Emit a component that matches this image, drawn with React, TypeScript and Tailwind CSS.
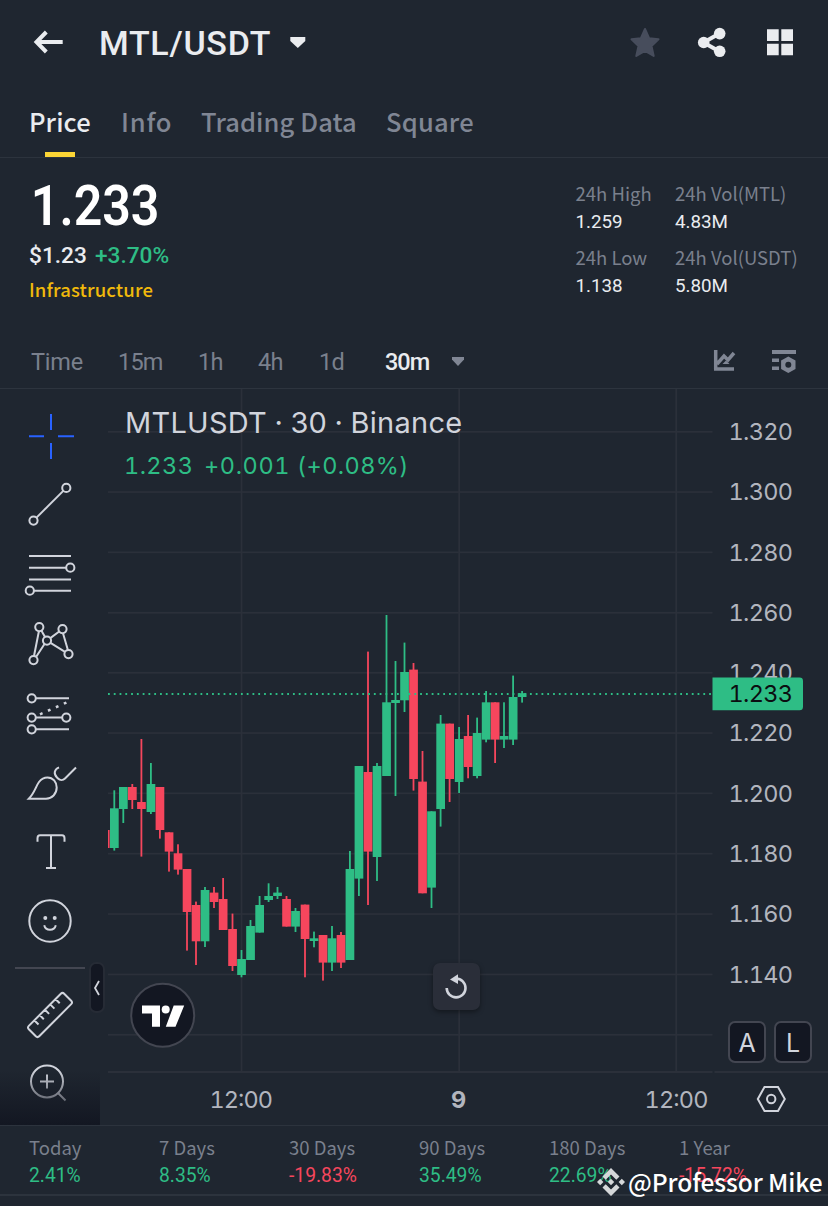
import React from 'react';

type Candle = [x: number, up: boolean, high: number, top: number, bottom: number, low: number];

const CANDLES: Candle[] = [
  [105.3, false, 830, 830, 848, 848],
  [114.4, true, 790.3, 808.3, 848, 850.6],
  [123.4, true, 787, 787, 809, 823],
  [132.4, false, 784, 787, 800, 809],
  [141.5, false, 739, 802, 809, 856.6],
  [151, true, 763, 784, 812, 814],
  [160, false, 787, 787, 830, 838.6],
  [169.1, false, 832.3, 832.3, 851.6, 871.6],
  [178.1, false, 844.3, 853.3, 869.6, 874.6],
  [187.1, false, 869, 869, 912, 950.6],
  [196.1, false, 901.6, 905, 941.3, 965],
  [205.1, true, 887, 890, 941.3, 947],
  [214.1, false, 887, 892.6, 902, 908],
  [223.2, false, 878, 899, 930, 930],
  [232.6, false, 913.6, 929, 966, 971],
  [241.6, true, 950, 959, 975, 977.3],
  [250.6, true, 920, 926, 960, 960],
  [259.7, true, 896, 905, 932.6, 932.6],
  [268.7, true, 883.3, 896, 900, 902],
  [277.6, true, 887, 892.6, 896, 899],
  [286.6, false, 896, 899, 926.6, 926.6],
  [295.6, true, 908, 911, 926.6, 932],
  [305.1, false, 904.6, 904.6, 939, 977.3],
  [314.1, true, 931.6, 938.3, 941, 947.3],
  [323.1, false, 935, 935, 962.6, 980.6],
  [332.1, true, 926, 938.3, 962.6, 971],
  [341.1, false, 932, 935, 962.6, 968],
  [350, true, 851, 869, 960, 960],
  [359, true, 766, 766, 878.6, 896],
  [368.1, false, 651.6, 772, 851.6, 905],
  [377.1, true, 763, 766, 857, 881],
  [386.6, true, 615, 702.3, 776, 776],
  [395.6, true, 661, 700, 703, 796],
  [404.6, true, 642.6, 672, 700.3, 712],
  [413.6, false, 663, 669.6, 779, 790.6],
  [422.6, false, 751, 781.6, 893.3, 893.3],
  [431.6, true, 811.3, 811.3, 887.6, 908],
  [440.7, true, 715, 723.6, 809, 826.6],
  [449.7, false, 723.6, 723.6, 779, 802],
  [459.2, true, 727, 739, 782, 793],
  [468.2, false, 715, 736, 767, 778.3],
  [477.2, true, 717.6, 733, 776, 778.3],
  [486.2, true, 691, 702.3, 739.6, 742.3],
  [495.2, false, 702.3, 702.3, 739.6, 763],
  [504.1, true, 702.3, 736, 739.6, 748],
  [513.2, true, 675.6, 697, 739.6, 745],
  [522.2, true, 691, 693.2, 697, 702.6],
];

const PRICES: [string, number][] = [
  ['1.320', 431.8],
  ['1.300', 492],
  ['1.280', 552.3],
  ['1.260', 612.7],
  ['1.240', 672.7],
  ['1.220', 733],
  ['1.200', 793.3],
  ['1.180', 853.6],
  ['1.160', 914],
  ['1.140', 974.4],
];

const STATS: [string, string, boolean][] = [
  ['Today', '2.41%', true],
  ['7 Days', '8.35%', true],
  ['30 Days', '-19.83%', false],
  ['90 Days', '35.49%', true],
  ['180 Days', '22.69%', true],
  ['1 Year', '-15.72%', false],
];

const WORDS = "font-['Noto_Sans_CJK_SC','Open_Sans',sans-serif]";
const DIGITS = "font-['Roboto',sans-serif]";

function Header() {
  return (
    <header className="flex h-[86px] items-center">
      <svg className="mb-[2px] ml-[33px] h-[24px] w-[31px] shrink-0" viewBox="33 30 31 24" fill="none" stroke="#eaecef" strokeWidth="4">
        <path d="M62.7 42H37M46.3 32 36.5 42 46.3 52" />
      </svg>
      <h1 className="mb-[1px] ml-[35px] w-[190px] font-['Roboto',sans-serif] text-[34px] font-medium leading-none tracking-[0.7px] text-[#eaecef]">
        MTL/USDT
      </h1>
      <svg className="mb-[4px] h-[13px] w-[18px] shrink-0" viewBox="289 34 18 13" fill="#eaecef">
        <path d="M290.3 36h15v4l-7.5 7-7.500-7z" />
      </svg>
      <svg className="ml-[322px] h-[32px] w-[32px] shrink-0" viewBox="629 27 32 32" fill="#474d5c" stroke="#474d5c" strokeWidth="2" strokeLinejoin="round">
        <path d="m645 29 4.200 9.300 9.300 1-7 6.600 2.200 10-8.700-5-8.700 5 2.200-10-7-6.600 9.300-1z" />
      </svg>
      <svg className="ml-[36px] h-[32px] w-[31px] shrink-0" viewBox="697 27 31 32" fill="#eaecef">
        <path d="m719.500 33.500-16 9 16 9" fill="none" stroke="#eaecef" strokeWidth="4" />
        <circle cx="719.700" cy="33.600" r="5.800" />
        <circle cx="703.700" cy="42.500" r="5.800" />
        <circle cx="719.700" cy="51.300" r="5.800" />
      </svg>
      <svg className="mb-[2px] ml-[38px] h-[28px] w-[28px] shrink-0" viewBox="766 28 28 28" fill="#eaecef">
        <path d="M767 29.300h11.700V41H767zM781.300 29.300H793V41h-11.700zM767 43.800h11.700v11.500H767zM781.300 43.800H793v11.500h-11.700z" />
      </svg>
    </header>
  );
}

function Tabs() {
  return (
    <nav className={`${WORDS} flex h-[72px] border-b border-[#2c333d] pl-[29px] text-[25.5px] font-medium text-[#808694]`}>
      <div className="flex w-[92px] flex-col">
        <span className="mt-[15px] h-[51px] leading-[40px] tracking-[0.1px] text-[#eaecef]">Price</span>
        <span className="ml-[16px] h-[5px] w-[30px] bg-[#fcd535]" />
      </div>
      <span className="mt-[15px] w-[80px] leading-[40px] tracking-[0.8px]">Info</span>
      <span className="mt-[15px] w-[185px] whitespace-nowrap leading-[40px] tracking-[0.1px]">Trading Data</span>
      <span className="mt-[15px] leading-[40px] tracking-[0.2px]">Square</span>
    </nav>
  );
}

function Metric({ label, value }: { label: string; value: string }) {
  return (
    <div className="h-[63.500px] whitespace-nowrap">
      <div className={`${WORDS} h-[27px] text-[18.500px] leading-[25px] text-[#7a808d]`}>{label}</div>
      <div className={`${DIGITS} h-[27px] text-[18.800px] leading-[29px] text-[#eaecef]`}>{value}</div>
    </div>
  );
}

function Summary() {
  return (
    <section className="flex h-[175px] justify-between pl-[29px]">
      <div>
        <div className={`${DIGITS} mt-[18px] h-[60px] w-[150px] origin-left scale-x-[0.910] pl-[2px] text-[55px] font-semibold leading-[60px] text-white`}>1.233</div>
        <div className={`${DIGITS} mt-[5px] flex h-[30px] gap-[8px] text-[22.700px] font-medium leading-[30px]`}>
          <span className="text-[#eaecef]">$1.23</span>
          <span className="text-[#2ebd85]">+3.70%</span>
        </div>
        <div className={`${WORDS} mt-[4px] h-[28px] text-[18.500px] font-medium leading-[28px] tracking-[0.130px] text-[#f0b90b]`}>Infrastructure</div>
      </div>
      <div className="mt-[23px] flex w-[252.500px]">
        <div className="w-[99.500px]">
          <Metric label="24h High" value="1.259" />
          <Metric label="24h Low" value="1.138" />
        </div>
        <div>
          <Metric label="24h Vol(MTL)" value="4.83M" />
          <Metric label="24h Vol(USDT)" value="5.80M" />
        </div>
      </div>
    </section>
  );
}

function Intervals() {
  return (
    <div className={`${DIGITS} flex h-[56px] items-center border-b border-[#2d343e] pl-[31px] pt-[1px] text-[23.500px] leading-none text-[#7a808d] [&>span]:pt-[3px]`}>
      <span className="w-[87px] tracking-[-0.200px]">Time</span>
      <span className="w-[80px] tracking-[-0.800px]">15m</span>
      <span className="w-[60px] tracking-[-0.700px]">1h</span>
      <span className="w-[61px] tracking-[-0.700px]">4h</span>
      <span className="w-[66px] tracking-[-0.700px]">1d</span>
      <span className="w-[66px] font-medium tracking-[-1px] text-[#eaecef]">30m</span>
      <svg className="h-[11px] w-[14px]" viewBox="0 0 14 11" fill="#808694">
        <path d="M1 1h12v2.500L7 10 1 3.500z" />
      </svg>
      <svg className="ml-[247px] h-[24px] w-[24px]" viewBox="712 349 24 24" fill="none" stroke="#808694" strokeWidth="3.500">
        <path d="M715.700 350v19M714 369h20M717 364l7-8 4 4 6-7" />
        <path d="m726 360.500 3.500 3.500h-7z" fill="#808694" stroke="none" />
      </svg>
      <svg className="ml-[35px] h-[26px] w-[26px]" viewBox="771 348 26 26" fill="#808694">
        <path d="M772 350h24v4h-24zM772 358.500h7v3.500h-7zM772 366.500h7v3.500h-7z" />
        <path fillRule="evenodd" d="m788.300 356.500 7.200 4v8.500l-7.200 4-7.200-4v-8.500zm0 5.300a3 3 0 1 0 0 6 3 3 0 0 0 0-6z" />
      </svg>
    </div>
  );
}

function Tool({ children }: { children: React.ReactNode }) {
  return (
    <div className="flex h-[69.250px] w-[100px] shrink-0 items-center justify-center">
      <svg className="h-[56px] w-[56px]" viewBox="-28 -28 56 56" fill="none" stroke="#d1d4dc" strokeWidth="2">
        {children}
      </svg>
    </div>
  );
}

function Toolbar() {
  return (
    <aside className="relative h-[736px] w-[108px] shrink-0 overflow-hidden pt-[12.500px]">
      <Tool>
        <path stroke="#2962ff" d="M-21 .200h15M8 .200h16M1-22v16M1 7v16" />
      </Tool>
      <Tool>
        <path d="m-13.500 12.600 26.800-26.700" />
        <circle cx="16.300" cy="-17.100" r="4.100" />
        <circle cx="-16.500" cy="15.600" r="4.100" />
      </Tool>
      <Tool>
        <path d="M-21-18.900h42M-21-7.300h37M-21 4.400h42M-16 15.700h37" />
        <circle cx="20.300" cy="-7.300" r="4.100" />
        <circle cx="-20.200" cy="15.700" r="4.100" />
      </Tool>
      <Tool>
        <path d="M-11.100-12.800-16 12M-8.500-13.300-5-7M9.200-12.500.300-5.900M13-10.800l4.900 16.800M.500-1.200 15 7.800M-5.500 0l-8.300 12.800" />
        <circle cx="-10.700" cy="-16.900" r="4.100" />
        <circle cx="12.500" cy="-14.900" r="4.100" />
        <circle cx="-3" cy="-3.400" r="4.100" />
        <circle cx="18.500" cy="10.100" r="4.100" />
        <circle cx="-16.500" cy="16.100" r="4.100" />
      </Tool>
      <Tool>
        <path d="M-14-14.700h33M-14 4.600h26M-14 16.300h33" />
        <path d="m-10 1.300 27-12" strokeWidth="2.500" strokeDasharray="2.800 5.900" />
        <circle cx="-18.300" cy="-14.700" r="4.100" />
        <circle cx="-18.300" cy="4.600" r="4.100" />
        <circle cx="16.300" cy="4.600" r="4.100" />
        <circle cx="-18.300" cy="16.300" r="4.100" />
      </Tool>
      <Tool>
        <path d="M-21.200 16.700C-15.500 11-14 4-11 0-8-4-5-4.600-2.500-4.600 3-4.600 6.700 0 6.700 5.600 6.700 12 2 16.700-4 16.700zM9-14.600C4-12.500 3.500-8 7-4.500l1 1c2 2 5 2 7 0l11-11" />
      </Tool>
      <Tool>
        <path d="M-12.500-10.200v-3.500c0-2 .800-3 2.500-3h22c1.700 0 2.500 1 2.500 3v3.500M1-16.700v32.900M-4 16H6" />
      </Tool>
      <Tool>
        <circle cx="0" cy="0" r="20.700" />
        <path d="M-5.800 4.300c1.500 6 10.100 6 11.600 0" />
        <path d="M-6.700-3a2 2 0 1 0 4 0 2 2 0 1 0-4 0M2.700-3a2 2 0 1 0 4 0 2 2 0 1 0-4 0" fill="#d1d4dc" stroke="none" />
      </Tool>
      <div className="ml-[15px] mt-[11.500px] h-[2px] w-[70px] bg-[#434651]" />
      <div className="h-[11.500px]" />
      <Tool>
        <path strokeLinejoin="round" d="M10.800-21.300q1.700-1.700 3.400 0l7 7q1.700 1.700 0 3.400L-10.800 21.300q-1.700 1.700-3.400 0l-7-7q-1.700-1.700 0-3.400zM-15.500 5.500l4 4M-10.200.200l4 4M-4.900-5.100l4 4M.400-10.400l4 4M5.700-15.700l4 4" />
      </Tool>
      <Tool>
        <circle cx="-3" cy="-2.500" r="16" />
        <path d="M-10-2.500H4M-3-9.500v14M8 9l7.500 7.500" />
      </Tool>
      <div className="absolute bottom-0 left-0 h-[55px] w-[100px] bg-linear-to-b from-[#131722]/0 to-[#131722]" />
      <div className="absolute left-[89px] top-[573px] flex h-[51px] w-[16px] items-center justify-center rounded-[7px] border-2 border-[#262b35] bg-[#131722]">
        <svg className="h-[16px] w-[8px] shrink-0" viewBox="0 0 8 16" fill="none" stroke="#d1d4dc" strokeWidth="1.800">
          <path d="M6 1 2 8l4 7" />
        </svg>
      </div>
    </aside>
  );
}

function Chart() {
  return (
    <div className="relative h-[736px] w-[720px]">
      <svg className="block h-[736px] w-[720px]" viewBox="108 389 720 736">
        <g fill="#2b303a">
          {PRICES.map(([p, y]) => (
            <rect key={p} x="108" y={y - 0.8} width="604.500" height="1.700" />
          ))}
          <rect x="108" y="1033.900" width="604.500" height="1.700" />
          <rect x="240.700" y="389" width="1.700" height="682" />
          <rect x="458.300" y="389" width="1.700" height="682" />
          <rect x="675.400" y="389" width="1.700" height="682" />
          <rect x="108" y="1071" width="604.500" height="2" />
          <rect x="714.500" y="1071" width="113.500" height="2" />
        </g>
        {CANDLES.map(([x, up, high, top, bottom, low]) => (
          <g key={x} fill={up ? '#2ebd85' : '#f6465d'}>
            <rect x={x - 1} y={high} width="1.800" height={low - high} />
            <rect x={x - 4.4} y={top} width="8.700" height={bottom - top} />
          </g>
        ))}
        <path d="M108 694h604" stroke="#2ebd85" strokeWidth="1.800" strokeDasharray="1.800 3.980" />
        <g className="font-['Inter',sans-serif] text-[23.500px] tabular-nums" fill="#b2b5be">
          {PRICES.map(([p, y]) => (
            <text key={p} x="728.500" y={y + 8.3} textLength="64.500">
              {p}
            </text>
          ))}
          <text x="209.500" y="1108" textLength="63.500">12:00</text>
          <text x="451" y="1108" className="font-bold">9</text>
          <text x="644.500" y="1108" textLength="64">12:00</text>
        </g>
        <path d="M712.500 677.500h87a3.500 3.500 0 0 1 3.500 3.500v25.800a3.500 3.500 0 0 1-3.500 3.500h-87z" fill="#2ebd85" />
        <text x="728.500" y="702" textLength="64.500" className="font-['Inter',sans-serif] text-[23.500px] tabular-nums" fill="#0b0e11">
          1.233
        </text>
        <g fill="none" stroke="#d1d4dc" strokeWidth="2">
          <path d="m757.800 1099 6.700-12h13.500l6.800 12-6.800 12h-13.500z" />
          <circle cx="771.200" cy="1099" r="4.200" />
        </g>
        <circle cx="162.700" cy="1015.300" r="31.500" fill="#131722" stroke="#434651" strokeWidth="2" />
        <g fill="#fff">
          <path d="M142 1005.500h18v21.300h-8v-13.300h-10zM173.700 1005.500h10.500l-8.700 21.300h-9.700z" />
          <circle cx="165.700" cy="1009.600" r="4" />
        </g>
      </svg>
      <div className="absolute left-[17px] top-[14px] whitespace-nowrap font-['Inter',sans-serif] text-[29px] leading-[40px] tracking-[0.250px] text-[#d1d4dc] [word-spacing:-1px]">
        MTLUSDT · 30 · Binance
      </div>
      <div className="absolute left-[16px] top-[61px] flex whitespace-nowrap font-['Inter',sans-serif] text-[23.500px] tabular-nums leading-[32px] text-[#2ebd85]">
        <span className="w-[80px] tracking-[0.400px]">1.233</span>
        <span className="w-[93px] tracking-[0.600px]">+0.001</span>
        <span className="tracking-[0.400px]">(+0.08%)</span>
      </div>
      <div className="absolute left-[325px] top-[574px] flex h-[46.500px] w-[46.500px] items-center justify-center rounded-[7px] bg-[#2a2e39] shadow-[0_2px_5px_rgba(0,0,0,0.400)]">
        <svg className="h-[28px] w-[28px]" viewBox="442.500 972.500 28 28" fill="none" stroke="#d1d4dc" strokeWidth="2.600">
          <path d="M447.200 988.500a9.400 9.400 0 1 0 9.400-9.400" />
          <path d="m450.500 980 8-5.200v9.600z" fill="#d1d4dc" stroke="none" />
        </svg>
      </div>
      <div className="absolute left-[620px] top-[632px] flex gap-[8px] font-['Inter',sans-serif] text-[25px] leading-none text-[#d1d4dc]">
        <div className="flex h-[42px] w-[38px] items-center justify-center rounded-[7px] border-2 border-[#434651] bg-[#131722] pt-[2px]">A</div>
        <div className="flex h-[42px] w-[38px] items-center justify-center rounded-[7px] border-2 border-[#434651] bg-[#131722] pt-[2px]">L</div>
      </div>
    </div>
  );
}

function Performance() {
  return (
    <footer className="relative h-[81px] border-t border-[#2c333d] pl-[29px]">
      <div className="grid h-[69px] grid-cols-[130px_130px_130px_130px_130px_130px] pt-[8px]">
        {STATS.map(([label, value, up]) => (
          <div key={label}>
            <div className={`${WORDS} h-[29px] text-[18.500px] leading-[26px] text-[#7a808d]`}>{label}</div>
            <div className={`${DIGITS} h-[26px] text-[19.300px] leading-[26px] ${up ? 'text-[#2ebd85]' : 'text-[#f6465d]'}`}>{value}</div>
          </div>
        ))}
      </div>
      <div className="-ml-[29px] -mt-[1px] h-[2px] bg-[#2c333d]" />
      <div className={`${WORDS} absolute left-[597px] top-[39px] flex items-center whitespace-nowrap text-[24.500px] leading-[34px] text-white`}>
        <svg className="mr-[3px] h-[28px] w-[28px]" viewBox="0 0 28 28" fill="#d5d7d9">
          <path d="m14 0 8.500 8.500-3.200 3.200L14 6.400l-5.300 5.300-3.200-3.200zM3.200 10.800 6.400 14l-3.200 3.200L0 14zM24.800 10.800 28 14l-3.200 3.200-3.200-3.200zM14 10.800l3.200 3.200-3.200 3.200-3.200-3.200zM8.700 16.300l5.300 5.300 5.300-5.300 3.200 3.200L14 28l-8.500-8.500z" />
        </svg>
        <span className="font-medium tracking-[-0.050px]">@Professor Mike</span>
      </div>
    </footer>
  );
}

export default function App() {
  return (
    <div className="h-[1206px] w-[828px] overflow-hidden bg-[#1f2630]">
      <Header />
      <Tabs />
      <Summary />
      <Intervals />
      <div className="flex h-[736px]">
        <Toolbar />
        <Chart />
      </div>
      <Performance />
    </div>
  );
}
